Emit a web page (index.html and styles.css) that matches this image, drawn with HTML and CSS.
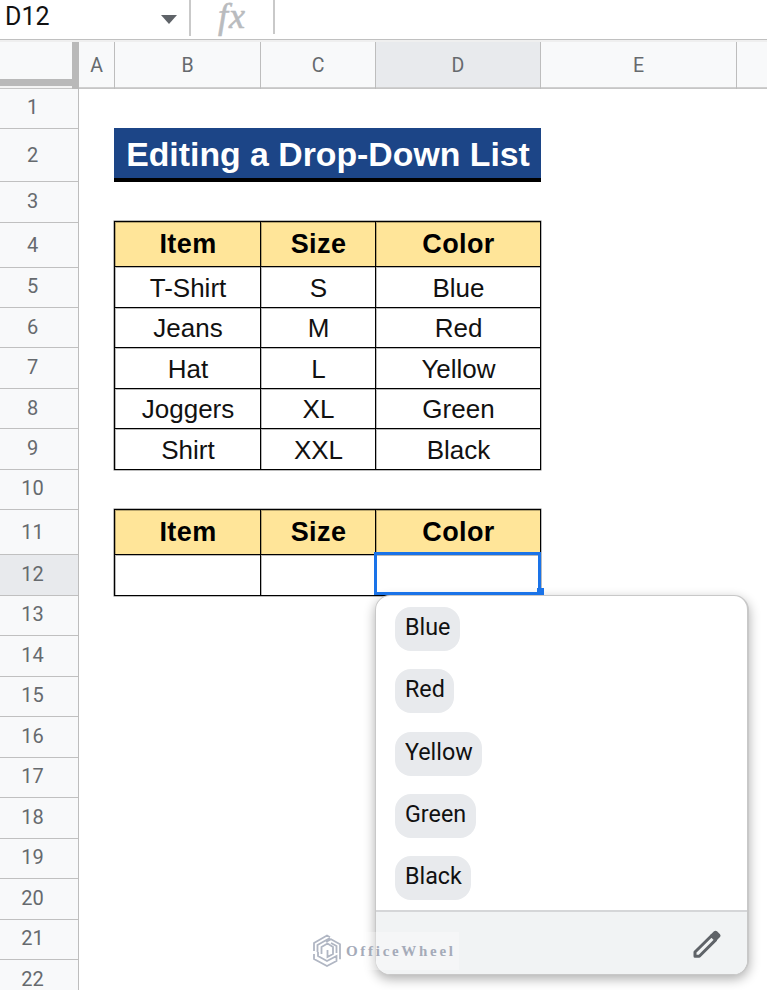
FILE: index.html
```html
<!DOCTYPE html>
<html lang="en">
<head>
<meta charset="utf-8">
<title>Editing a Drop-Down List</title>
<link rel="stylesheet" href="styles.css">
</head>
<body>
<div class="app">
  <header class="formula-bar">
    <div class="name-box"><span>D12</span><i class="caret"></i></div>
    <div class="fx">fx</div>
  </header>
  <div class="col-heads">
    <div class="corner"></div>
    <div>A</div><div>B</div><div>C</div><div class="active">D</div><div>E</div><div></div>
  </div>
  <div class="sheet">
    <div class="row-heads">
      <div>1</div><div>2</div><div>3</div><div>4</div><div>5</div><div>6</div><div>7</div><div>8</div><div>9</div><div>10</div><div>11</div><div class="active">12</div><div>13</div><div>14</div><div>15</div><div>16</div><div>17</div><div>18</div><div>19</div><div>20</div><div>21</div><div>22</div>
    </div>
    <main class="cells">
      <h1 class="title">Editing a Drop-Down List</h1>
      <div class="table items">
        <div class="th">Item</div><div class="th">Size</div><div class="th">Color</div>
        <div>T-Shirt</div><div>S</div><div>Blue</div>
        <div>Jeans</div><div>M</div><div>Red</div>
        <div>Hat</div><div>L</div><div>Yellow</div>
        <div>Joggers</div><div>XL</div><div>Green</div>
        <div>Shirt</div><div>XXL</div><div>Black</div>
      </div>
      <div class="table entry">
        <div class="th">Item</div><div class="th">Size</div><div class="th">Color</div>
        <div></div><div></div>
        <div class="selected">
          <div class="menu">
            <ul class="options">
              <li><span>Blue</span></li><li><span>Red</span></li><li><span>Yellow</span></li><li><span>Green</span></li><li><span>Black</span></li>
            </ul>
            <div class="menu-foot">
              <svg width="30" height="30" viewBox="0 0 30 30"><path d="M3 27.2V23L19.5 6.7l4.2 4.2L7.3 27.2z" fill="none" stroke="#5f6368" stroke-width="3" stroke-linejoin="round"/><path d="M18.5 5.8l3.5-3.5q1.6-1.2 3 0l3 3q1.2 1.4 0 2.8l-3.5 3.5z" fill="#5f6368"/></svg>
            </div>
          </div>
          <div class="ring"></div>
          <div class="handle"></div>
        </div>
      </div>
    </main>
  </div>
  <div class="watermark">
    <svg width="30" height="34" viewBox="0 0 30 34" fill="none" stroke="#b0b6c3" stroke-width="1.8"><path d="M2 17V9L15 1.500l3 1.700M5.500 18v-7L18 4M14 8l5-2.800 9 5v15M19 9l5.500 3v7M2 20v5l13 7 9.500-5v-5l-9.500 5-9-5v-4M9.500 20v-7l6-3.500 5.500 3.500v7l-5.500 3v-7"/></svg>
    <span>OfficeWheel</span>
  </div>
</div>
</body>
</html>
```
FILE: styles.css
```css
* { box-sizing: border-box; }
body { margin: 0; background: #fff; font-family: Roboto, sans-serif; }
.app { position: relative; width: 767px; height: 990px; overflow: hidden; }

.formula-bar { display: flex; height: 42px; border-bottom: 2px solid #efefef; box-shadow: inset 0 -1px #c0c0c0; }
.name-box { display: flex; justify-content: space-between; width: 191px; height: 36px; padding: 1px 12px 0 5px; border-right: 2px solid #c9c9c9; font-size: 25px; line-height: 31px; color: #111; }
.caret { width: 16px; height: 9px; margin-top: 14px; background: #5f6368; clip-path: polygon(0 0, 100% 0, 50% 100%); }
.fx { width: 84px; height: 34px; border-right: 2px solid #c9c9c9; text-align: center; font: italic 36px/32px "Liberation Serif", serif; letter-spacing: 1px; color: #b9bbbe; -webkit-text-stroke: .6px #b9bbbe; }

.col-heads { display: grid; grid-template-columns: 79px 36px 146px 115px 165px 196px 31px; height: 47px; background: #f8f9fa; }
.col-heads > div { border-right: 1px solid #bdbdbd; font-size: 19.5px; line-height: 47px; text-align: center; color: #666a6e; box-shadow: inset 0 -1px #c6c6c6, inset 0 -2px #cfcfcf; }
.col-heads .active { background: #e8eaed; }
.col-heads .corner { border-right: 7px solid #b9b9b9; box-shadow: inset 0 -1px #c6c6c6, inset 0 -3px #f4f4f4, inset 0 -10px #b9b9b9; }

.sheet { display: flex; }
.row-heads { display: grid; grid-template-rows: 40px 53px 40.7px 45px repeat(6, 40.4px) 45px repeat(11, 40.5px); flex: none; width: 79px; border-right: 1px solid #bdbdbd; background: #f8f9fa; }
.row-heads div { display: flex; align-items: center; justify-content: center; padding-right: 13px; padding-bottom: 2px; border-bottom: 1px solid #c0c0c0; font-size: 20px; color: #666a6e; }
.row-heads .active { background: #e8eaed; }
.row-heads div:nth-child(1) { padding-bottom: 3px; }
.row-heads div:nth-child(2), .row-heads div:nth-child(4), .row-heads div:nth-child(11) { padding-bottom: 0; }

.cells { padding: 39px 0 0 35px; font-family: "Liberation Sans", Arial, sans-serif; }
.title { width: 427px; height: 54px; margin: 0 0 39px; padding-left: 1px; border-bottom: 4px solid #000; background: #1c4587; color: #fff; font-size: 33.8px; line-height: 53px; text-align: center; white-space: nowrap; }
.table { display: grid; grid-template-columns: 146px 115px 165px; width: 427px; border-top: 1px solid #000; border-left: 1px solid #000; box-shadow: 0 0 0 .5px #777; }
.items { grid-template-rows: 45px repeat(5, 40.5px); margin-bottom: 39.500px; }
.entry { grid-template-rows: 45px 40.5px; }
.table > div { display: flex; align-items: center; justify-content: center; padding: 3px 0 0 1px; border-right: 1px solid #000; border-bottom: 1px solid #000; box-shadow: inset 1px 1px rgba(0,0,0,.28); font-size: 26px; color: #111; }
.table .th { padding-top: 0; background: #ffe599; font-weight: 700; font-size: 27px; color: #000; letter-spacing: .4px; }

.table > .selected { position: relative; }
.ring { position: absolute; left: -2px; top: -3px; width: 167px; height: 43px; border: 3.500px solid #1a73e8; }
.handle { position: absolute; right: -4px; bottom: 0; width: 7px; height: 7px; background: #1a73e8; }
.menu { position: absolute; left: -1px; top: 40px; width: 374px; height: 380px; border: 1px solid #c8c8c8; border-right-width: 2px; border-radius: 15px; overflow: hidden; background: #fff; box-shadow: 0 4px 12px rgba(0,0,0,.32); font-family: Roboto, sans-serif; }
.options { display: flex; flex-direction: column; gap: 18.3px; height: 314px; margin: 0; padding: 11px 19px 0; list-style: none; }
.options li { display: flex; }
.options span { height: 44px; padding: 0 9.500px 0 10px; border-radius: 16px; background: #e8eaed; font-size: 23.3px; line-height: 41px; color: #111; }
.menu-foot { display: flex; align-items: center; justify-content: flex-end; height: 65px; padding-right: 25px; border-top: 2px solid #d5d6d8; background: #f1f3f4; }

.watermark { position: absolute; left: 308px; top: 932px; display: flex; align-items: center; gap: 4px; width: 151px; height: 38px; padding-left: 4px; background: rgba(255,255,255,.3); }
.watermark span { font: 700 15px "Liberation Serif", serif; letter-spacing: 2.7px; color: #a5abb9; }
```
